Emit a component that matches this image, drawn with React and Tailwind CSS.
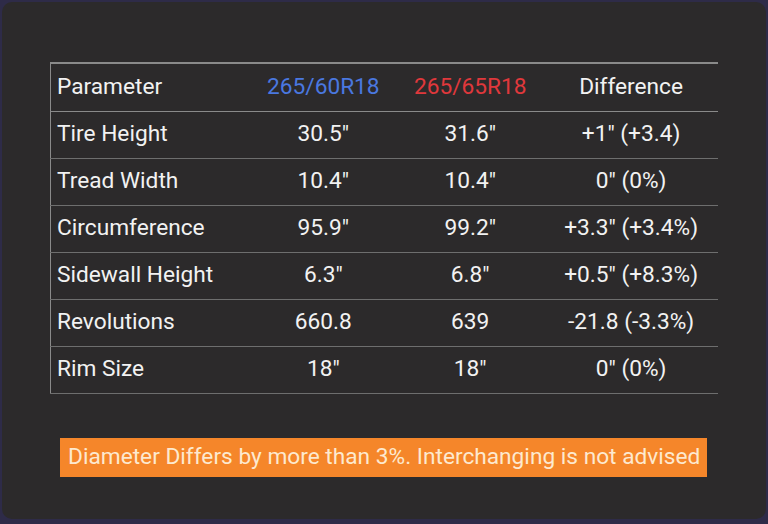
const rows = [
  ["Tire Height", "30.5\"", "31.6\"", "+1\" (+3.4)"],
  ["Tread Width", "10.4\"", "10.4\"", "0\" (0%)"],
  ["Circumference", "95.9\"", "99.2\"", "+3.3\" (+3.4%)"],
  ["Sidewall Height", "6.3\"", "6.8\"", "+0.5\" (+8.3%)"],
  ["Revolutions", "660.8", "639", "-21.8 (-3.3%)"],
  ["Rim Size", "18\"", "18\"", "0\" (0%)"],
];

export default function App() {
  return (
    <div
      className="w-[768px] h-[524px] bg-[#2e2b48] p-[2px] pb-[5px]"
      style={{ fontFamily: "Roboto, 'Liberation Sans', sans-serif" }}
    >
      <div className="h-full rounded-[10px] bg-[#2c2a2b] pt-[60px] pl-[48px] pr-[46px]">
        <table className="w-[668px] border-collapse text-[22.7px] text-[#f2f2f2] border-l border-[#8a8a8a]">
          <colgroup>
            <col className="w-[200px]" />
            <col className="w-[146px]" />
            <col className="w-[148px]" />
            <col className="w-[174px]" />
          </colgroup>
          <thead>
            <tr className="h-[48px] border-t-2 border-b border-[#8a8a8a]">
              <th className="text-left font-normal pl-[6px]">Parameter</th>
              <th className="font-normal text-[#4a78e0]">265/60R18</th>
              <th className="font-normal text-[#e0383c]">265/65R18</th>
              <th className="font-normal">Difference</th>
            </tr>
          </thead>
          <tbody>
            {rows.map((r) => (
              <tr key={r[0]} className="h-[47px] border-b border-[#6e6e6e]">
                <td className="pl-[6px]">{r[0]}</td>
                <td className="text-center">{r[1]}</td>
                <td className="text-center">{r[2]}</td>
                <td className="text-center">{r[3]}</td>
              </tr>
            ))}
          </tbody>
        </table>
        <div className="mt-[44px] ml-[10px] w-[647px] h-[39px] bg-[#f5862a] flex items-center pl-[8px] text-[22.7px] text-[#fde9cf] whitespace-nowrap">
          Diameter Differs by more than 3%. Interchanging is not advised
        </div>
      </div>
    </div>
  );
}
